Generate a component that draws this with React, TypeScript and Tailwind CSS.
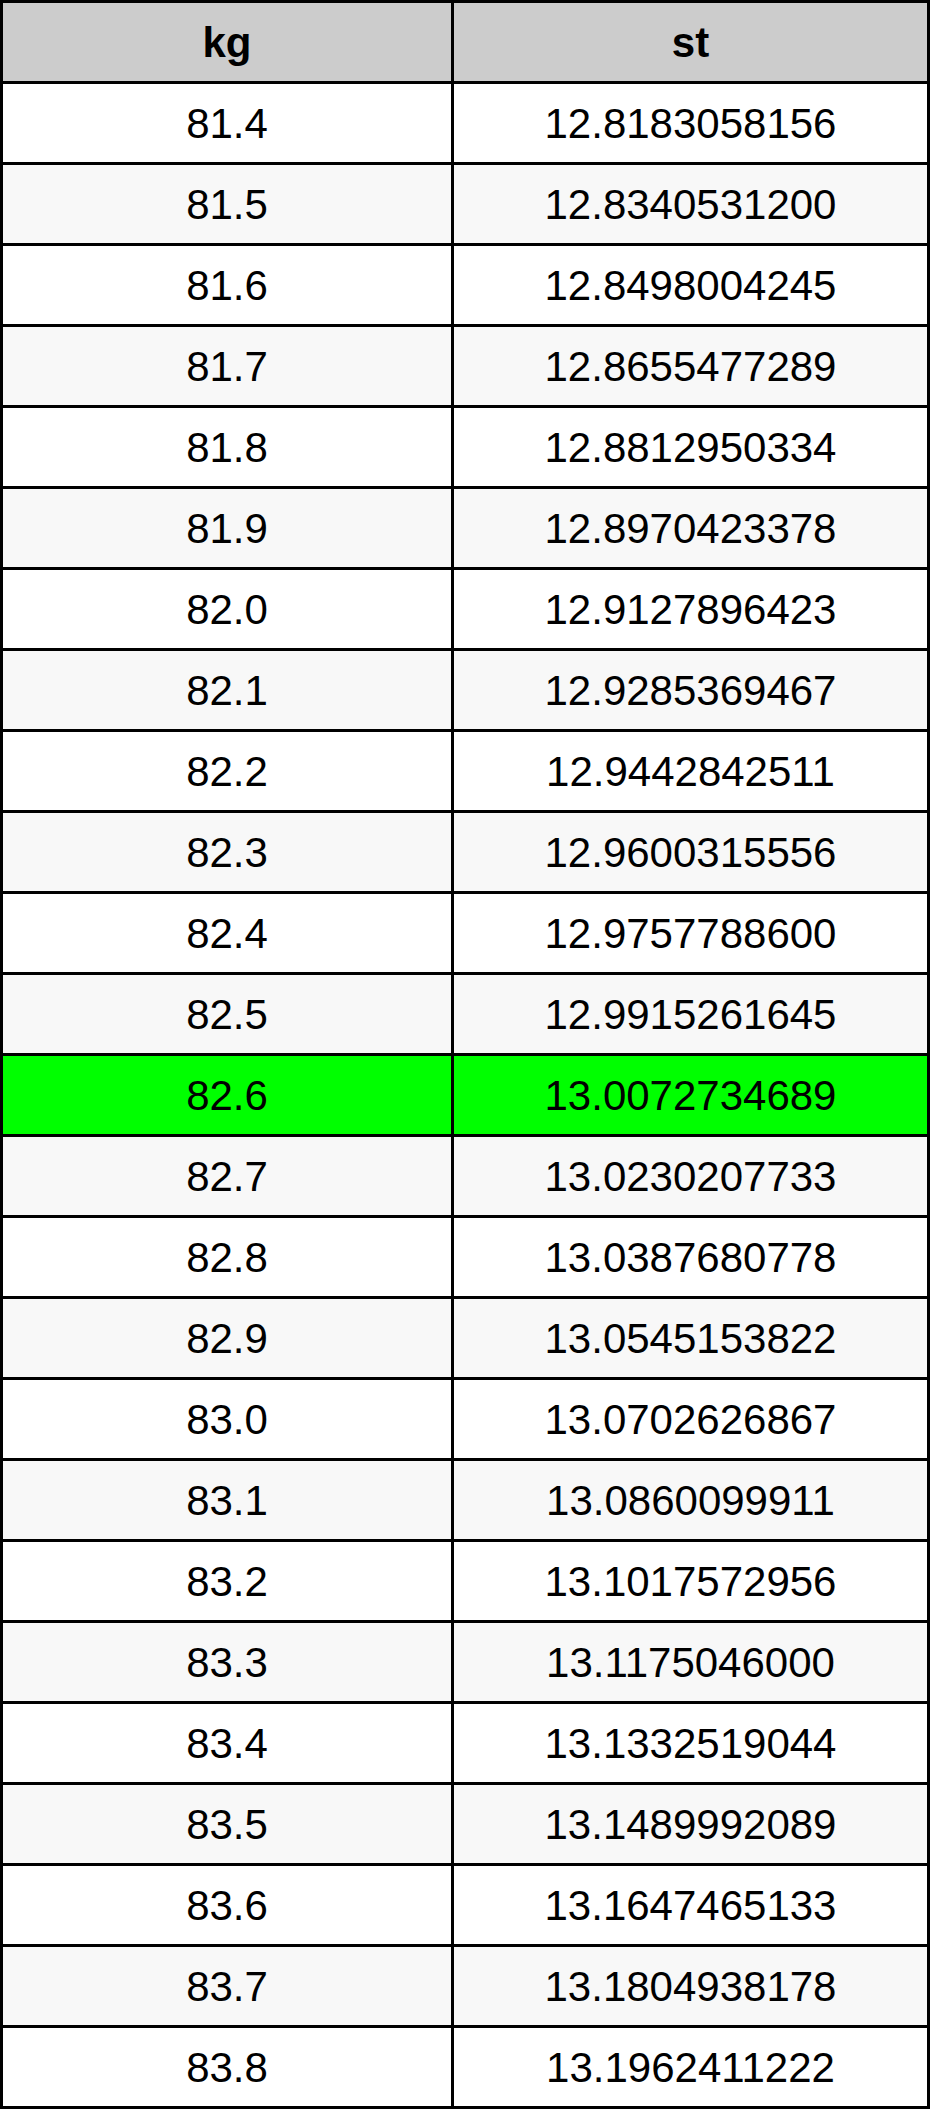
const rows: [string, string][] = [
  ['81.4', '12.8183058156'],
  ['81.5', '12.8340531200'],
  ['81.6', '12.8498004245'],
  ['81.7', '12.8655477289'],
  ['81.8', '12.8812950334'],
  ['81.9', '12.8970423378'],
  ['82.0', '12.9127896423'],
  ['82.1', '12.9285369467'],
  ['82.2', '12.9442842511'],
  ['82.3', '12.9600315556'],
  ['82.4', '12.9757788600'],
  ['82.5', '12.9915261645'],
  ['82.6', '13.0072734689'],
  ['82.7', '13.0230207733'],
  ['82.8', '13.0387680778'],
  ['82.9', '13.0545153822'],
  ['83.0', '13.0702626867'],
  ['83.1', '13.0860099911'],
  ['83.2', '13.1017572956'],
  ['83.3', '13.1175046000'],
  ['83.4', '13.1332519044'],
  ['83.5', '13.1489992089'],
  ['83.6', '13.1647465133'],
  ['83.7', '13.1804938178'],
  ['83.8', '13.1962411222'],
]

// the highlighted row is the value being converted
const HIGHLIGHT = '82.6'

function Cell({ children, className }: { children: React.ReactNode; className: string }) {
  return <div className={`flex items-center justify-center ${className}`}>{children}</div>
}

export default function App() {
  return (
    <div className="w-[930px] bg-white font-['Liberation_Sans',Arial,Helvetica,sans-serif] text-[42px] text-black">
      <div className="grid grid-cols-[448px_473px] auto-rows-[78px] gap-[3px] bg-black p-[3px]">
        <Cell className="bg-[#cccccc] font-bold">kg</Cell>
        <Cell className="bg-[#cccccc] font-bold">st</Cell>
        {rows.map(([kg, st], i) => {
          const bg = kg === HIGHLIGHT ? 'bg-[#00ff00]' : i % 2 === 1 ? 'bg-[#f8f8f8]' : 'bg-white'
          return [
            <Cell key={kg + 'a'} className={bg}>{kg}</Cell>,
            <Cell key={kg + 'b'} className={bg}>{st}</Cell>,
          ]
        })}
      </div>
    </div>
  )
}
